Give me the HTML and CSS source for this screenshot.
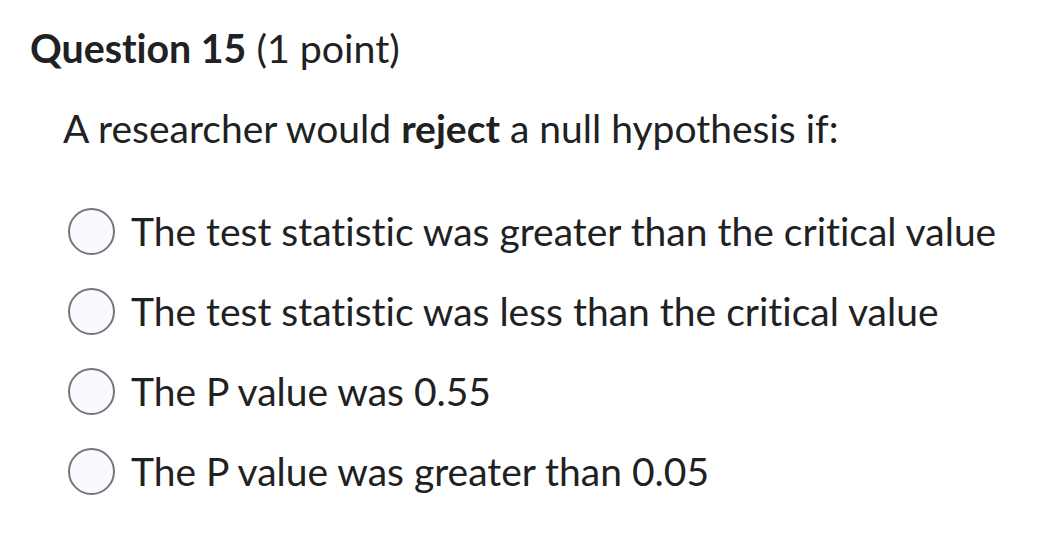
FILE: index.html
```html
<!DOCTYPE html>
<html>
<head>
<meta charset="utf-8">
<link rel="stylesheet" href="styles.css">
</head>
<body>
<div class="page">
  <h2 class="q-title"><strong>Question 15</strong> <span class="pts">(1 point)</span></h2>
  <div class="q-body">
    <p class="prompt">A researcher would <strong>reject</strong> a null hypothesis if:</p>
    <div class="options">
      <label class="opt"><span class="radio"></span><span class="opt-text">The test statistic was greater than the critical value</span></label>
      <label class="opt"><span class="radio"></span><span class="opt-text">The test statistic was less than the critical value</span></label>
      <label class="opt"><span class="radio"></span><span class="opt-text">The P value was 0.55</span></label>
      <label class="opt"><span class="radio"></span><span class="opt-text">The P value was greater than 0.05</span></label>
    </div>
  </div>
</div>
</body>
</html>
```
FILE: styles.css
```css
html, body {
  margin: 0;
  padding: 0;
  background: #ffffff;
}
body {
  font-family: Lato, "Liberation Sans", sans-serif;
  color: #202122;
  font-variant-ligatures: none;
}
.page {
  padding: 24px 0 0 30px;
}
.q-title {
  margin: 0;
  font-size: 39.3px;
  line-height: 48px;
  font-weight: 400;
}
.q-title strong {
  font-weight: 700;
}
.q-body {
  padding-left: 33px;
}
.prompt {
  margin: 32px 0 0 0;
  font-size: 39px;
  line-height: 48px;
}
.prompt strong {
  font-weight: 700;
}
.options {
  margin-top: 55px;
  display: flex;
  flex-direction: column;
  gap: 32px;
}
.opt {
  display: flex;
  align-items: center;
  gap: 16px;
  height: 48px;
  padding-left: 5px;
}
.radio {
  width: 43px;
  height: 43px;
  border: 2px solid #767676;
  border-radius: 50%;
  background: #f9faff;
  flex: none;
}
.opt-text {
  font-size: 39px;
  line-height: 48px;
}
```
